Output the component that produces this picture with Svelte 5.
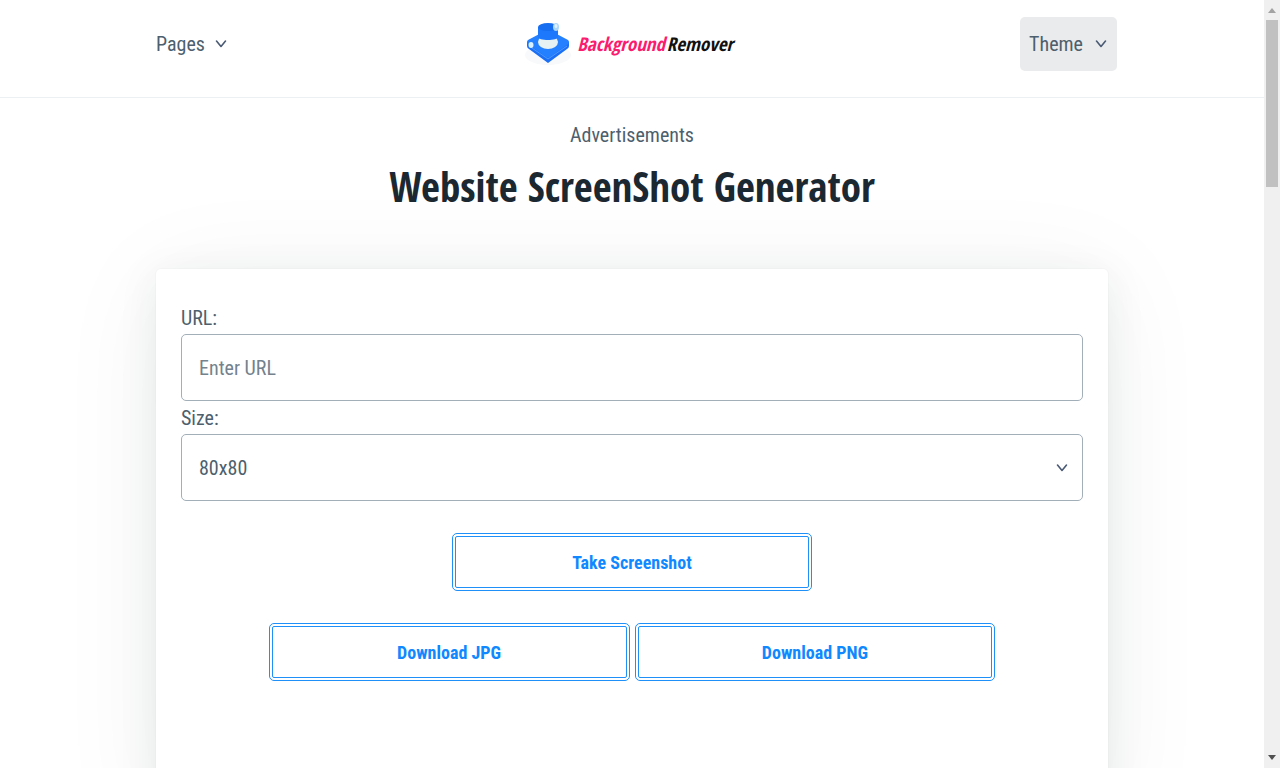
<script>
  const pages = ['Background Remover', 'Website ScreenShot Generator', 'Contact'];
  const themes = ['Auto', 'Light', 'Dark'];
  const sizes = ['80x80', '160x160', '320x320', '640x640', '1280x720'];

  let openMenu = $state('');
  let url = $state('');
  let size = $state('80x80');

  function toggle(name) {
    openMenu = openMenu === name ? '' : name;
  }
</script>

{#snippet chevron()}
  <svg class="chevron" viewBox="0 0 12 12" width="12" height="12" aria-hidden="true">
    <path d="M1.5 3 L6 8.5 L10.5 3" />
  </svg>
{/snippet}

<div class="window">
  <div class="page">
    <header class="site-header">
      <nav class="container nav">
        <div class="dropdown">
          <button class="menu-button" onclick={() => toggle('pages')}>Pages {@render chevron()}</button>
          {#if openMenu === 'pages'}
            <ul class="menu">
              {#each pages as page}
                <li><a href="#top">{page}</a></li>
              {/each}
            </ul>
          {/if}
        </div>

        <a class="logo" href="#top">
          <svg viewBox="0 0 46 44" width="46" height="44" aria-hidden="true">
            <ellipse cx="23" cy="33" rx="23" ry="10" fill="#f8f9fa" />
            <path d="M2 20 L2 24 Q2 26 4 27 L23 41 L42 27 Q44 26 44 24 L44 20 Z" fill="#1a6ff5" />
            <path d="M20 9 Q23 7 26 9 L43 18 Q45 20 43 22 L25 35 Q23 36 21 35 L3 22 Q1 20 3 18 Z" fill="#2480ff" />
            <path d="M4 24 L23 37 L42 24" fill="none" stroke="#4d98ff" stroke-width="1" />
            <ellipse cx="23" cy="20" rx="10" ry="7" fill="#e6f1f4" />
            <path d="M13 5 L13 15 C13 19 33 19 33 15 L33 5 Z" fill="#1d78fb" />
            <ellipse cx="23" cy="5" rx="10" ry="4" fill="#176df0" />
            <ellipse cx="31" cy="5" rx="3" ry="4" fill="#a8d6fb" />
            <ellipse cx="31" cy="4" rx="1.5" ry="2" fill="#dff1ff" />
            <ellipse cx="6" cy="23" rx="2.5" ry="3" fill="#d9f0ff" />
          </svg>
          <span class="wordmark"><span class="pink">Background</span><span>Remover</span></span>
        </a>

        <div class="dropdown right">
          <button class="menu-button theme" onclick={() => toggle('theme')}>Theme {@render chevron()}</button>
          {#if openMenu === 'theme'}
            <ul class="menu">
              {#each themes as theme}
                <li><a href="#top">{theme}</a></li>
              {/each}
            </ul>
          {/if}
        </div>
      </nav>
    </header>

    <main class="container">
      <p class="ads">Advertisements</p>
      <h1>Website ScreenShot Generator</h1>

      <article class="card">
        <label for="url">URL:</label>
        <input id="url" type="text" placeholder="Enter URL" bind:value={url} />

        <label for="size">Size:</label>
        <div class="select">
          <select id="size" bind:value={size}>
            {#each sizes as option}
              <option value={option}>{option}</option>
            {/each}
          </select>
          {@render chevron()}
        </div>

        <div class="actions">
          <button class="action">Take Screenshot</button>
        </div>
        <div class="actions">
          <button class="action">Download JPG</button>
          <button class="action">Download PNG</button>
        </div>
      </article>
    </main>
  </div>

  <div class="scrollbar" aria-hidden="true">
    <svg viewBox="0 0 16 20" width="16" height="20"><path d="M4 13 L8 8 L12 13 Z" fill="#a3a3a3" /></svg>
    <div class="thumb"></div>
    <svg class="down" viewBox="0 0 16 20" width="16" height="20"><path d="M4 7 L12 7 L8 12 Z" fill="#505050" /></svg>
  </div>
</div>

<style>
  :global(body) {
    overflow: hidden;
    background: #fff;
  }

  .window {
    display: flex;
    height: 100vh;
    overflow: hidden;
    color: #4d5f6d;
    font-family: 'Roboto Condensed', 'Noto Sans', sans-serif;
    font-size: 20px;
    line-height: 28px;
  }

  .page {
    flex: 1;
    min-width: 0;
  }

  .container {
    width: calc(100% - 32px);
    max-width: 952px;
    margin: 0 auto;
  }

  .site-header {
    border-bottom: 1px solid #edf0f3;
  }

  .nav {
    display: grid;
    grid-template-columns: 1fr auto 1fr;
    align-items: start;
    height: 97px;
    box-sizing: border-box;
    padding-top: 17px;
  }

  .dropdown {
    position: relative;
    margin: 0 -9px;
  }

  .right {
    justify-self: end;
  }

  .menu-button {
    display: flex;
    align-items: center;
    gap: 10px;
    height: 54px;
    padding: 0 10px 0 9px;
    border: none;
    border-radius: 5px;
    background: transparent;
    color: inherit;
    font: inherit;
    cursor: pointer;
  }

  .theme {
    gap: 12px;
    background: #e9ebed;
  }

  .menu {
    position: absolute;
    top: 58px;
    left: 0;
    z-index: 2;
    margin: 0;
    padding: 8px 16px;
    border-radius: 5px;
    background: #fff;
    box-shadow: 0 4px 24px rgba(27, 40, 50, 0.15);
    list-style: none;
    white-space: nowrap;
  }

  .menu a {
    color: inherit;
    text-decoration: none;
  }

  .right .menu {
    right: 0;
    left: auto;
  }

  .chevron {
    flex: none;
    fill: none;
    stroke: #4a5a75;
    stroke-width: 1.6;
    stroke-linecap: round;
    stroke-linejoin: round;
  }

  .logo {
    display: flex;
    align-items: center;
    gap: 6px;
    height: 54px;
    padding-right: 6px;
    color: #111;
    text-decoration: none;
  }

  .wordmark {
    display: flex;
    gap: 2px;
    font-family: 'Open Sans Condensed', 'Open Sans', sans-serif;
    font-size: 19px;
    font-style: italic;
    font-weight: 700;
  }

  .pink {
    color: #fb1b6f;
  }

  .ads {
    margin: 23px 0 0;
    text-align: center;
  }

  h1 {
    margin: 14px 0 0;
    color: #1b2832;
    font-family: 'Open Sans Condensed', 'Open Sans', sans-serif;
    font-size: 41px;
    font-weight: 700;
    line-height: 46px;
    text-align: center;
  }

  .card {
    box-sizing: border-box;
    min-height: 540px;
    margin-top: 60px;
    padding: 32px 25px;
    border-radius: 5px;
    background: #fff;
    box-shadow:
      0 10px 110px rgba(27, 50, 50, 0.06),
      0 8px 40px rgba(27, 45, 50, 0.08),
      0 0 0 1px rgba(27, 40, 50, 0.02);
  }

  label {
    display: block;
    height: 33px;
    line-height: 34px;
  }

  input,
  select {
    display: block;
    box-sizing: border-box;
    width: 100%;
    height: 67px;
    margin: 0;
    padding: 0 17px;
    border: 1px solid #a2afb9;
    border-radius: 5px;
    background: #fff;
    color: inherit;
    font: inherit;
    appearance: none;
  }

  input::placeholder {
    color: #73828c;
    opacity: 1;
  }

  .select {
    position: relative;
  }

  .select :global(.chevron) {
    position: absolute;
    top: 28px;
    right: 15px;
    pointer-events: none;
  }

  .actions {
    display: flex;
    justify-content: center;
    gap: 5px;
    margin-top: 32px;
  }

  .action {
    width: 40%;
    height: 58px;
    border: 4px double #1e90f8;
    border-radius: 5px;
    background: #fff;
    color: #1088ff;
    font-family: 'Roboto Condensed', 'Liberation Sans', sans-serif;
    font-size: 18px;
    font-weight: 700;
    cursor: pointer;
  }

  .scrollbar {
    display: flex;
    flex: none;
    flex-direction: column;
    width: 16px;
    background: #f0f0f0;
  }

  .thumb {
    height: 167px;
    margin: 0 2px;
    background: #c1c1c1;
  }

  .down {
    margin-top: auto;
  }
</style>
